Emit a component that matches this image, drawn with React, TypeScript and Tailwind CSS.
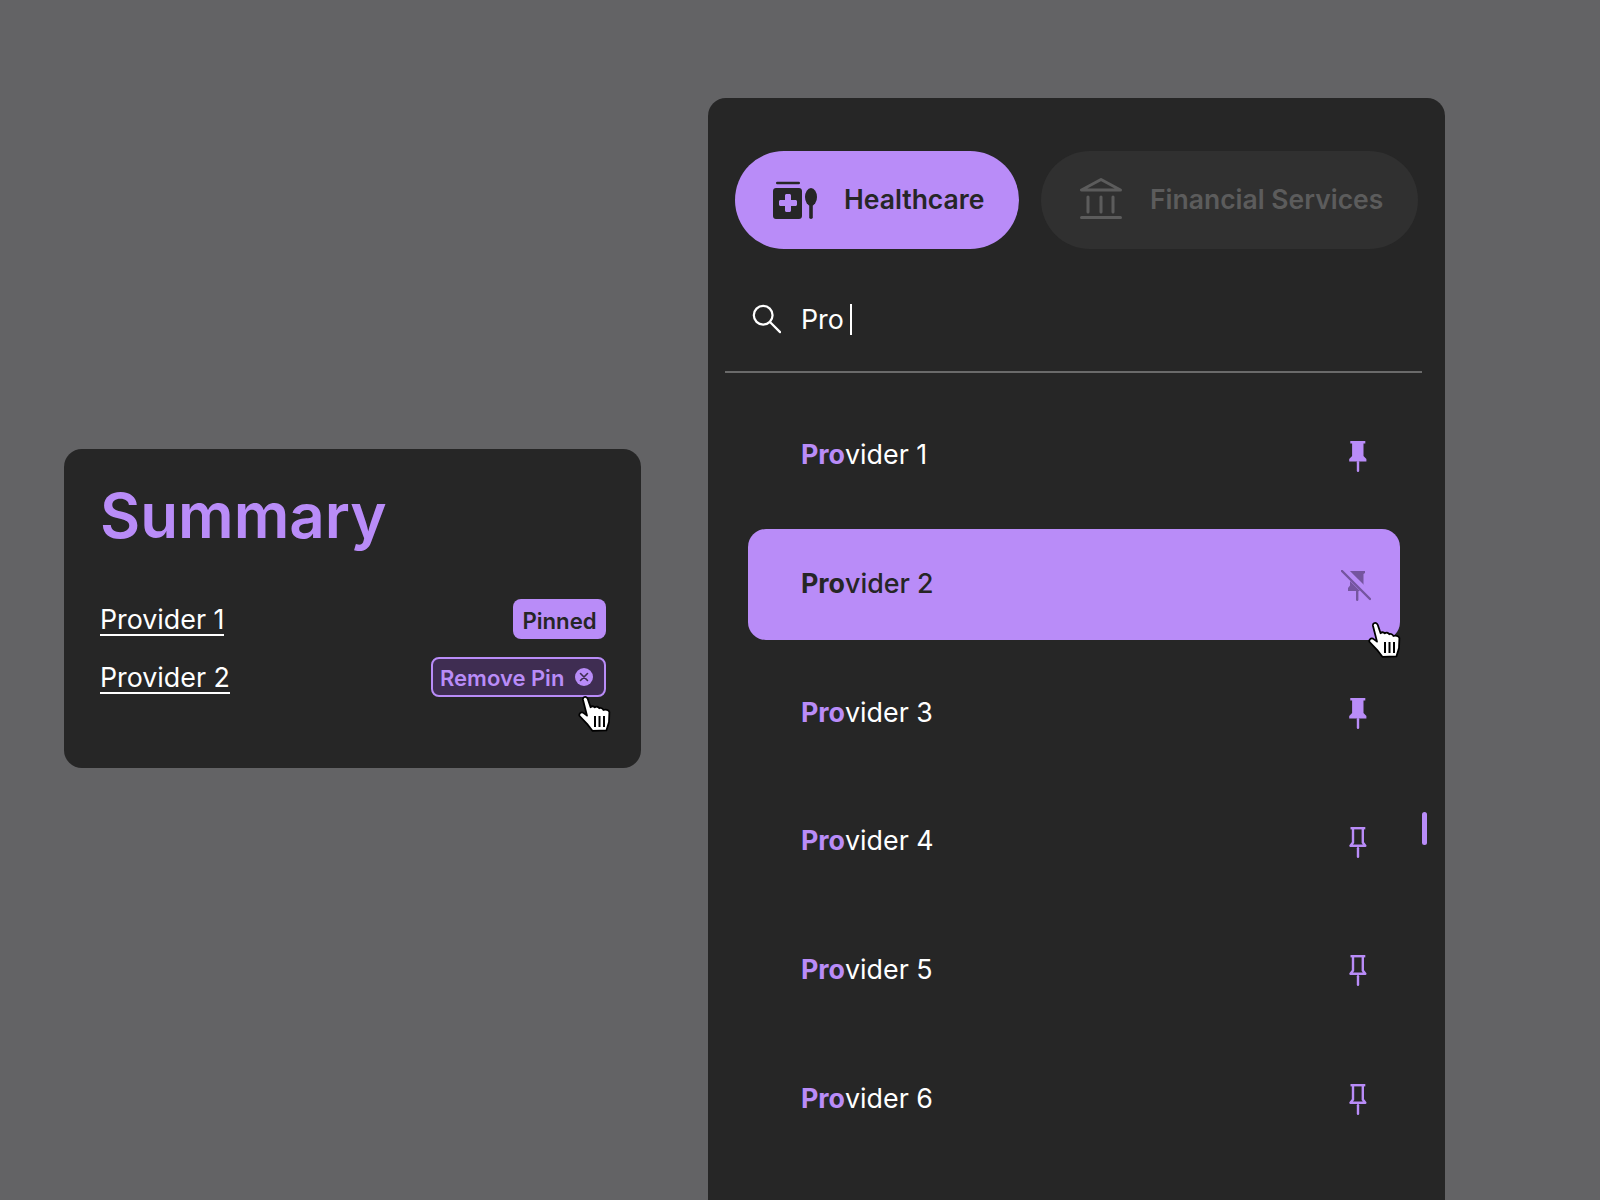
import type { ReactNode } from "react";

function Pin({ outline = false }: { outline?: boolean }) {
  return (
    <svg width="18" height="31" viewBox="0 0 18 31" className="mt-[1px] text-[#b98cf8]">
      {outline ? (
        <g fill="none" stroke="currentColor" strokeWidth="2.4">
          <path d="M1.5 1.2H16.3" />
          <path d="M4 1.5V15.5L1.5 18.8H16.3L13.8 15.5V1.5" strokeLinejoin="round" />
        </g>
      ) : (
        <path
          d="M1.3 0H16.3V2.5H14.5V15L17.4 18V20.5H0.2V18L3.1 15V2.5H1.3Z"
          fill="currentColor"
        />
      )}
      <rect x="7.8" y="20" width="2.4" height="11" rx="1.2" fill="currentColor" />
    </svg>
  );
}

function PinOff() {
  return (
    <svg width="30" height="32" viewBox="0 0 30 32" className="mt-[3px]">
      <path d="M8 1H24V3L22.5 4V15L25 18V21H7V18L9 15.5V4Z" fill="#75559f" />
      <rect x="15" y="20" width="2.4" height="11" rx="1.2" fill="#75559f" />
      <path d="M2.5 -0.5L30.5 27.5" stroke="#b98cf8" strokeWidth="7" />
      <path d="M1 1L29 29" stroke="#75559f" strokeWidth="2.4" strokeLinecap="round" />
    </svg>
  );
}

function HealthIcon() {
  return (
    <svg width="44" height="38" viewBox="0 0 44 38">
      <rect x="3" y="0.7" width="24" height="2.6" rx="1.3" fill="#262626" />
      <path
        fillRule="evenodd"
        clipRule="evenodd"
        d="M3 7H26C27.7 7 29 8.3 29 10V35C29 36.7 27.7 38 26 38H3C1.3 38 0 36.7 0 35V10C0 8.3 1.3 7 3 7ZM12 14.5C12 13.7 12.7 13 13.5 13H16.5C17.3 13 18 13.7 18 14.5V19H22.5C23.3 19 24 19.7 24 20.5V23.5C24 24.3 23.3 25 22.5 25H18V29.5C18 30.3 17.3 31 16.5 31H13.5C12.7 31 12 30.3 12 29.5V25H7.5C6.7 25 6 24.3 6 23.5V20.5C6 19.7 6.7 19 7.5 19H12Z"
        fill="#262626"
      />
      <ellipse cx="38" cy="16" rx="6" ry="9" fill="#262626" />
      <rect x="36.2" y="20" width="3.6" height="18" rx="1.8" fill="#262626" />
    </svg>
  );
}

function BankIcon() {
  return (
    <svg width="42" height="44" viewBox="0 0 42 44" fill="none" stroke="#5c5c5c" strokeLinecap="round">
      <path d="M1.5 12H40.5L21 1.5Z" strokeWidth="3" strokeLinejoin="round" />
      <path d="M8 19V34M21 19V34M33 19V34" strokeWidth="3" />
      <path d="M1.5 39.5H40.5" strokeWidth="3" />
    </svg>
  );
}

function SearchIcon() {
  return (
    <svg width="30" height="30" viewBox="0 0 32 32" fill="none" stroke="#ffffff" strokeWidth="2.4" strokeLinecap="round" className="mb-[2px]">
      <circle cx="13" cy="12" r="10" />
      <path d="M20.5 19.5L31 30" />
    </svg>
  );
}

function HandCursor({ className }: { className: string }) {
  return (
    <svg width="33" height="36" viewBox="0 0 33 36" className={className}>
      <path
        d="M6 1.2C7.8 0.4 9.2 1.4 9.8 3L12.6 11.2C13.4 10 15.6 9.8 16.8 11.4C18 10.2 20.4 10.6 21.2 12.2C22.8 11.4 24.8 12.4 25.4 14C27.4 13.2 30.6 13.6 31.4 16L31 26L28.4 34.4L14.4 34.8L9 27.8L1.6 20C0.6 18.2 2.6 15.6 5 16.6L9 19.6L5 4C4.8 2.8 5.2 1.6 6 1.2Z"
        fill="#ffffff"
        stroke="#000000"
        strokeWidth="1.8"
        strokeLinejoin="round"
      />
      <path d="M17 20V31M21.5 20V31M26 20V31" stroke="#000000" strokeWidth="2" />
    </svg>
  );
}

function ClearIcon() {
  return (
    <svg width="18" height="18" viewBox="0 0 18 18">
      <circle cx="9" cy="9" r="9" fill="#b98cf8" />
      <path d="M5.5 5.5L12.5 12.5M12.5 5.5L5.5 12.5" stroke="#3f2d52" strokeWidth="1.6" strokeLinecap="round" />
    </svg>
  );
}

function Row({ n, icon, active = false }: { n: number; icon: ReactNode; active?: boolean }) {
  return (
    <div
      className={
        active
          ? "flex h-[111px] items-center justify-between rounded-[18px] bg-[#b98cf8] pl-[53px] pr-[29px] text-[26.8px] font-medium text-[#262626]"
          : "flex h-[111px] items-center justify-between pl-[53px] pr-[33px] text-[26.8px] text-white"
      }
    >
      <span className="mb-[2px]">
        <span className={active ? "font-bold" : "font-bold text-[#b98cf8]"}>Pro</span>vider {n}
      </span>
      {icon}
    </div>
  );
}

export default function App() {
  return (
    <div className="flex h-[1200px] w-[1600px] items-start overflow-hidden bg-[#636365] font-['Inter',sans-serif]">
      {/* Summary card */}
      <div className="relative ml-[64px] mt-[449px] h-[319px] w-[577px] rounded-[18px] bg-[#262626] pl-[36px] pr-[35px] pt-[28px]">
        <h1 className="text-[61.8px] font-semibold leading-[78px] text-[#b98cf8]">Summary</h1>
        <div className="mt-[44px] flex flex-col gap-[18px]">
          <div className="flex items-center justify-between">
            <span className="border-b-2 border-white pt-[3px] text-[26.8px] leading-[29px] text-white">Provider 1</span>
            <span className="flex h-[40px] w-[93px] items-center justify-center rounded-[8px] bg-[#b98cf8] pt-[3px] text-[22.2px] font-semibold text-[#262626]">
              Pinned
            </span>
          </div>
          <div className="flex items-center justify-between">
            <span className="border-b-2 border-white pt-[3px] text-[26.8px] leading-[29px] text-white">Provider 2</span>
            <span className="flex h-[40px] w-[175px] items-center gap-[11px] rounded-[8px] border-2 border-[#b98cf8] bg-[#3f2d52] pl-[7px] text-[22px] font-semibold text-[#b98cf8]">
              <span className="pt-[2px]">Remove Pin</span>
              <ClearIcon />
            </span>
          </div>
        </div>
        <HandCursor className="absolute left-[514px] top-[247px]" />
      </div>

      {/* Provider picker */}
      <div className="relative ml-[67px] mt-[98px] h-[1102px] w-[737px] rounded-t-[18px] bg-[#262626] pl-[17px] pr-[23px] pt-[53px]">
        <div className="ml-[10px] mr-[4px] flex gap-[22px]">
          <div className="flex h-[98px] w-[284px] items-center rounded-full bg-[#b98cf8] pl-[38px] text-[26.5px] font-semibold text-[#262626]">
            <HealthIcon />
            <span className="ml-[27px]">Healthcare</span>
          </div>
          <div className="flex h-[98px] w-[377px] items-center rounded-full bg-[#303030] pl-[39px] text-[26.5px] font-semibold text-[#5c5c5c]">
            <BankIcon />
            <span className="ml-[28px]">Financial Services</span>
          </div>
        </div>
        <div className="flex h-[124px] items-center border-b-2 border-[#6a6a6a] pl-[26px] pt-[20px] text-[26.8px] text-white">
          <SearchIcon />
          <span className="mb-[1px] ml-[20px]">Pro</span>
          <span className="mb-[1px] ml-[6px] h-[31px] w-[2px] bg-white" />
        </div>
        <div className="ml-[23px] mr-[22px] mt-[27px] flex flex-col gap-[17.7px]">
          <Row n={1} icon={<Pin />} />
          <Row n={2} icon={<PinOff />} active />
          <Row n={3} icon={<Pin />} />
          <Row n={4} icon={<Pin outline />} />
          <Row n={5} icon={<Pin outline />} />
          <Row n={6} icon={<Pin outline />} />
        </div>
        <div className="absolute left-[714px] top-[714px] h-[33px] w-[5px] rounded-full bg-[#b98cf8]" />
        <HandCursor className="absolute left-[660px] top-[524px]" />
      </div>
    </div>
  );
}
